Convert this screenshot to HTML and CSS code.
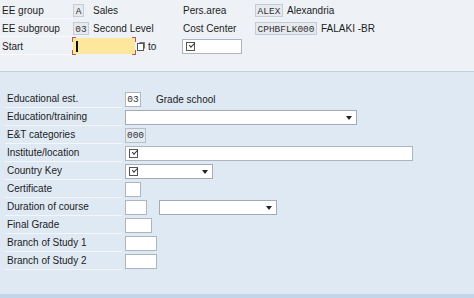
FILE: index.html
```html
<!DOCTYPE html>
<html>
<head>
  <meta charset="utf-8">
  <title>Education</title>
  <link rel="stylesheet" href="styles.css">
</head>
<body>
  <div class="head-area">
    <div class="hrow">
      <div class="hlabel">EE group</div>
      <div class="hcell"><span class="out w11">A</span></div>
      <div class="htext">Sales</div>
      <div class="hlabel2">Pers.area</div>
      <span class="out w28">ALEX</span>
      <div class="htext2">Alexandria</div>
    </div>
    <div class="hrow">
      <div class="hlabel">EE subgroup</div>
      <div class="hcell"><span class="out w16">03</span></div>
      <div class="htext">Second Level</div>
      <div class="hlabel2">Cost Center</div>
      <span class="out w62">CPHBFLK000</span>
      <div class="htext2">FALAKI -BR</div>
    </div>
    <div class="hrow">
      <div class="hlabel">Start</div>
      <div class="focus-input"><span class="caret"></span></div>
      <span class="f4-icon">
        <svg width="10" height="11" viewBox="0 0 10 11">
          <rect x="1.5" y="2.5" width="6" height="7" fill="#fff" stroke="#555"/>
          <path d="M3.5 1.5 H8.5 V7.5" fill="none" stroke="#777"/>
        </svg>
      </span>
      <div class="to-text">to</div>
      <div class="inp w60"><span class="req-icon"></span></div>
    </div>
  </div>

  <div class="form-area">
    <div class="frow">
      <div class="flabel">Educational est.</div>
      <div class="inp w16 mono">03</div>
      <div class="ftext">Grade school</div>
    </div>
    <div class="frow">
      <div class="flabel">Education/training</div>
      <div class="select w232"><span class="arrow"></span></div>
    </div>
    <div class="frow">
      <div class="flabel">E&amp;T categories</div>
      <div class="out-box w21 mono">000</div>
    </div>
    <div class="frow">
      <div class="flabel">Institute/location</div>
      <div class="inp w288"><span class="req-icon"></span></div>
    </div>
    <div class="frow">
      <div class="flabel">Country Key</div>
      <div class="select w88"><span class="req-icon"></span><span class="arrow"></span></div>
    </div>
    <div class="frow">
      <div class="flabel">Certificate</div>
      <div class="inp w16"></div>
    </div>
    <div class="frow">
      <div class="flabel">Duration of course</div>
      <div class="inp w22"></div>
      <div class="select w118 gap12"><span class="arrow"></span></div>
    </div>
    <div class="frow">
      <div class="flabel">Final Grade</div>
      <div class="inp w27"></div>
    </div>
    <div class="frow">
      <div class="flabel">Branch of Study 1</div>
      <div class="inp w32"></div>
    </div>
    <div class="frow">
      <div class="flabel">Branch of Study 2</div>
      <div class="inp w32"></div>
    </div>
  </div>
  <div class="bottom-band"></div>
</body>
</html>
```

FILE: styles.css
```css
html, body {
  margin: 0;
  padding: 0;
}

body {
  width: 474px;
  height: 298px;
  overflow: hidden;
  font-family: "Liberation Sans", Arial, sans-serif;
  font-size: 10px;
  color: #1c1c1c;
  background-color: #dfe9f4;
  display: flex;
  flex-direction: column;
}

/* header block */
.head-area {
  height: 72px;
  padding-top: 1px;
  box-sizing: border-box;
  background-color: #eef1f6;
  border-bottom: 1px solid #c4cdd8;
}

.hrow {
  display: flex;
  align-items: center;
  height: 18px;
}

.hlabel {
  width: 71px;
  height: 17px;
  line-height: 19px;
  padding-left: 2px;
  border-bottom: 1px solid #f9fafc;
}

.hcell {
  width: 20px;
}

.htext {
  width: 90px;
}

.hlabel2 {
  width: 72px;
}

.htext2 {
  margin-left: 4px;
}

.out {
  display: inline-block;
  height: 13px;
  line-height: 13px;
  box-sizing: border-box;
  border: 1px solid #c6ccd3;
  background-color: #e6e9ee;
  font-family: "Liberation Mono", "DejaVu Sans Mono", monospace;
  font-size: 9.5px;
  text-align: center;
  color: #333;
}

.w11 { width: 11px; }
.w16 { width: 16px; }
.w21 { width: 21px; }
.w22 { width: 22px; }
.w27 { width: 27px; }
.w28 { width: 28px; }
.w32 { width: 32px; }
.w60 { width: 60px; }
.w62 { width: 62px; }
.w88 { width: 88px; }
.w118 { width: 118px; }
.w232 { width: 232px; }
.w288 { width: 288px; }

.gap12 {
  margin-left: 12px;
}

.focus-input {
  position: relative;
  width: 62px;
  height: 16px;
  background-color: #fce79c;
  display: flex;
  align-items: center;
}

.focus-input:before,
.focus-input:after {
  content: "";
  position: absolute;
  left: -1px;
  right: -1px;
  height: 4px;
  border-left: 1px solid #b35a4a;
  border-right: 1px solid #b35a4a;
}

.focus-input:before {
  top: -1px;
  border-top: 1px solid #b35a4a;
  clip-path: polygon(0 0, 4px 0, 4px 100%, 0 100%, 0 0, 100% 0, 100% 100%, calc(100% - 4px) 100%, calc(100% - 4px) 0);
}

.focus-input:after {
  bottom: -1px;
  border-bottom: 1px solid #b35a4a;
  clip-path: polygon(0 0, 4px 0, 4px 100%, 0 100%, 0 0, 100% 0, 100% 100%, calc(100% - 4px) 100%, calc(100% - 4px) 0);
}

.caret {
  width: 2px;
  height: 11px;
  margin-left: 3px;
  background-color: #111;
}

.f4-icon {
  display: flex;
  margin-left: 1px;
}

.to-text {
  width: 34px;
  margin-left: 2px;
}

/* form block */
.form-area {
  flex: 1;
  padding-top: 18px;
}

.frow {
  display: flex;
  align-items: center;
  height: 18px;
}

.flabel {
  width: 115px;
  height: 17px;
  line-height: 18px;
  margin-left: 5px;
  margin-right: 3px;
  padding-left: 2px;
  border-bottom: 1px solid #f3f7fb;
}

.ftext {
  margin-left: 15px;
}

.inp,
.select,
.out-box {
  position: relative;
  height: 15px;
  box-sizing: border-box;
  border: 1px solid #adb5be;
  background-color: #fff;
  display: flex;
  align-items: center;
}

.out-box {
  background-color: #e4eaf1;
  border-color: #b6bec7;
}

.mono {
  font-family: "Liberation Mono", "DejaVu Sans Mono", monospace;
  font-size: 9.5px;
  justify-content: center;
  color: #333;
}

.select {
  border-color: #a3abb4;
}

.arrow {
  position: absolute;
  right: 4px;
  top: 5px;
  width: 0;
  height: 0;
  border-left: 3px solid transparent;
  border-right: 3px solid transparent;
  border-top: 4px solid #222;
}

.req-icon {
  width: 7px;
  height: 7px;
  margin-left: 3px;
  border: 1px solid #555;
  position: relative;
}

.req-icon:after {
  content: "";
  position: absolute;
  left: 2px;
  top: 0;
  width: 5px;
  height: 2px;
  border-left: 1px solid #333;
  border-bottom: 1px solid #333;
  transform: rotate(-45deg);
}

.bottom-band {
  height: 4px;
  background-color: #c2d5ea;
}
```
